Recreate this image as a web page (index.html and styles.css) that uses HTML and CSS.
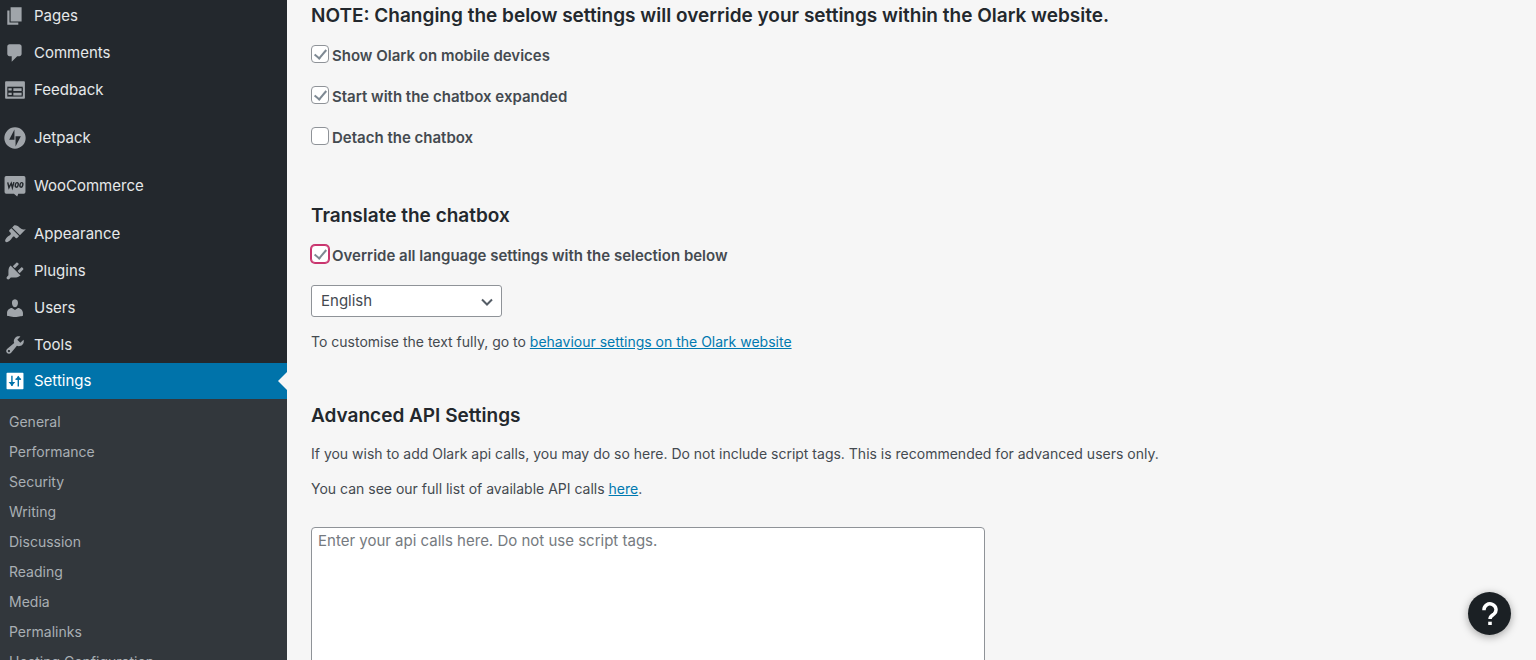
FILE: index.html
```
<!DOCTYPE html>
<html lang="en">
<head>
<meta charset="utf-8">
<title>Olark Settings</title>
<link rel="stylesheet" href="styles.css">
</head>
<body>
<div class="layout">
  <nav class="sidebar" aria-label="Main menu">
    <ul class="menu">
      <li><a class="menu-link" href="#"><svg class="icon" viewBox="0 0 20 20"><path d="M6 15V2h10v13H6zm-1 1h8v2H3V5h2v11z"/></svg>Pages</a></li>
      <li><a class="menu-link" href="#"><svg class="icon" viewBox="0 0 20 20"><path d="M5 2h9c1.100 0 2 .9 2 2v7c0 1.100-.9 2-2 2h-2l-5 5v-5H5c-1.100 0-2-.9-2-2V4c0-1.100.9-2 2-2z"/></svg>Comments</a></li>
      <li><a class="menu-link" href="#"><svg class="icon" viewBox="0 0 20 20"><path fill-rule="evenodd" d="M2 2h16c.55 0 1 .45 1 1v14c0 .55-.45 1-1 1H2c-.55 0-1-.45-1-1V3c0-.55.45-1 1-1zm2 6v2h3V8H4zm4 0v3h9V8H8zm-4 4v2h3v-2H4zm4 0v3h9v-3H8z" class="icon-plate"/><path class="icon-panel" d="M3 7h14v9H3z"/><path d="M4 8.500h3v2H4zM8.500 8.500H16v2.500H8.500zM4 12.500h3v2H4zM8.500 12.500H16V15H8.500z"/></svg>Feedback</a></li>
      <li class="group-start"><a class="menu-link" href="#"><svg class="icon" viewBox="0 0 20 20"><path fill-rule="evenodd" d="M10 .3a9.700 9.700 0 1 0 0 19.400A9.700 9.700 0 0 0 10 .3zM9.500 11.600H4.700l4.800-9.300zM10.500 17.700V8.400h4.800z"/></svg>Jetpack</a></li>
      <li class="group-start"><a class="menu-link" href="#"><svg class="icon" viewBox="0 0 20 20"><path d="M2 1h16a1.500 1.500 0 0 1 1.500 1.500v13A1.500 1.500 0 0 1 18 17h-5l-1 2.500L9 17H2a1.500 1.500 0 0 1-1.500-1.500v-13A1.500 1.500 0 0 1 2 1z"/><g class="icon-cut"><path d="M3.400 6.700l1.100 4.800 2.100-4 1 4 1.400-5"/><ellipse cx="11.600" cy="9" rx="1.300" ry="2.100" transform="rotate(12 11.600 9)"/><ellipse cx="15.800" cy="9" rx="1.300" ry="2.100" transform="rotate(12 15.800 9)"/></g></svg>WooCommerce</a></li>
      <li class="group-start"><a class="menu-link" href="#"><svg class="icon" viewBox="0 0 20 20"><path d="M14.480 11.060L7.410 3.990l1.500-1.500c.5-.56 2.300-.47 3.510.32 1.210.8 1.430 1.280 2.910 2.100 1.180.64 2.450 1.260 4.450.85zm-.71.71L6.700 4.700 4.930 6.470c-.39.39-.39 1.020 0 1.410l1.060 1.060c.39.39.39 1.030 0 1.420-.6.6-1.430 1.110-2.210 1.690-.35.26-.7.53-1.010.84C1.430 14.230.4 16.080 1.400 17.070c.99 1 2.840-.03 4.180-1.360.31-.31.58-.66.85-1.020.57-.78 1.080-1.610 1.690-2.210.39-.39 1.020-.39 1.410 0l1.060 1.060c.39.39 1.020.39 1.410 0z"/></svg>Appearance</a></li>
      <li><a class="menu-link" href="#"><svg class="icon" viewBox="0 0 20 20"><path d="M13.110 4.360L9.870 7.600 8 5.730l3.240-3.240c.35-.34 1.050-.2 1.560.32.52.51.66 1.210.31 1.550zm-8 1.770l.91-1.120 9.010 9.010-1.190.84c-.71.71-2.630 1.160-3.820 1.160H6.140L4.900 17.260c-.59.59-1.540.59-2.120 0-.59-.58-.59-1.530 0-2.120l1.240-1.240v-3.880c0-1.130.4-3.190 1.090-3.890zm7.260 3.970l3.240-3.240c.34-.35 1.040-.21 1.550.31.52.51.66 1.210.31 1.550l-3.240 3.250z"/></svg>Plugins</a></li>
      <li><a class="menu-link" href="#"><svg class="icon" viewBox="0 0 20 20"><path d="M10 9.250c-2.270 0-2.730-3.440-2.730-3.440C7 4.020 7.820 2 9.970 2c2.160 0 2.980 2.020 2.710 3.810 0 0-.41 3.440-2.680 3.440zm0 2.570L12.720 10c2.390 0 4.520 2.330 4.520 4.530v2.490s-3.650 1.130-7.240 1.130c-3.650 0-7.240-1.130-7.240-1.130v-2.490c0-2.250 1.940-4.480 4.470-4.480z"/></svg>Users</a></li>
      <li><a class="menu-link" href="#"><svg class="icon" viewBox="0 0 20 20"><path fill-rule="evenodd" d="M16.680 9.770c-1.340 1.340-3.300 1.670-4.950.99l-5.410 6.520c-.99.99-2.590.99-3.580 0s-.99-2.590 0-3.570l6.520-5.420c-.68-1.650-.35-3.610.99-4.950 1.280-1.280 3.120-1.620 4.720-1.060l-2.890 2.890 2.820 2.820 2.860-2.870c.53 1.580.18 3.390-1.080 4.650zM3.810 16.210c.4.39 1.040.39 1.430 0 .4-.4.4-1.040 0-1.430-.39-.4-1.030-.4-1.430 0-.39.39-.39 1.030 0 1.430z"/></svg>Tools</a></li>
      <li>
        <a class="menu-link current" href="#" aria-current="page"><svg class="icon" viewBox="0 0 20 20"><path d="M3 2.500h14a.7.7 0 0 1 .7.7v13.600a.7.7 0 0 1-.7.7H3a.7.7 0 0 1-.7-.7V3.200a.7.700 0 0 1 .7-.7z"/><g class="icon-cut"><path d="M7.200 5.300v9.200M13 6v9M10.500 8.300h5"/></g><path class="icon-arrow" d="M4.200 11h6l-3 3.600zM10.300 8.800h5.400L13 5.200z"/></svg>Settings</a>
        <ul class="submenu">
          <li><a href="#">General</a></li>
          <li><a href="#">Performance</a></li>
          <li><a href="#">Security</a></li>
          <li><a href="#">Writing</a></li>
          <li><a href="#">Discussion</a></li>
          <li><a href="#">Reading</a></li>
          <li><a href="#">Media</a></li>
          <li><a href="#">Permalinks</a></li>
          <li><a href="#">Hosting Configuration</a></li>
        </ul>
      </li>
    </ul>
  </nav>
  <main class="content">
    <section class="section">
      <h2>NOTE: Changing the below settings will override your settings within the Olark website.</h2>
      <div class="options">
        <label class="option"><input type="checkbox" checked>Show Olark on mobile devices</label>
        <label class="option"><input type="checkbox" checked>Start with the chatbox expanded</label>
        <label class="option"><input type="checkbox">Detach the chatbox</label>
      </div>
    </section>
    <section class="section">
      <h2>Translate the chatbox</h2>
      <div class="options">
        <label class="option"><input class="highlighted" type="checkbox" checked>Override all language settings with the selection below</label>
      </div>
      <div class="select-wrap">
        <select aria-label="Chatbox language"><option>English</option></select>
        <svg class="chevron" viewBox="0 0 12 8"><path d="M1 1.500l5 5 5-5"/></svg>
      </div>
      <p>To customise the text fully, go to <a href="#">behaviour settings on the Olark website</a></p>
    </section>
    <section class="section">
      <h2>Advanced API Settings</h2>
      <p>If you wish to add Olark api calls, you may do so here. Do not include script tags. This is recommended for advanced users only.</p>
      <p>You can see our full list of available API calls <a href="#">here</a>.</p>
      <textarea aria-label="API calls" rows="10" placeholder="Enter your api calls here. Do not use script tags."></textarea>
    </section>
  </main>
</div>
<button class="help" type="button" aria-label="Help"><svg viewBox="0 0 18 24"><path class="help-hook" d="M3 8.300V8a6 5.800 0 1 1 10 4c-2 1.600-4 2.200-4 5"/><path class="help-dot" d="M7.200 19.700h3.600V23H7.200z"/></svg></button>
</body>
</html>
```
FILE: styles.css
```
*,
*::before,
*::after {
  box-sizing: border-box;
}

body {
  margin: 0;
  height: 100vh;
  overflow: hidden;
  background: #f6f6f6;
  color: #444a50;
  font: 14px/20px Inter, "Liberation Sans", sans-serif;
}

.layout {
  display: flex;
  height: 100%;
}

.sidebar {
  flex: 0 0 287px;
  overflow: hidden;
  background: #23282d;
}

.menu,
.submenu {
  margin: 0;
  padding: 0;
  list-style: none;
}

/* The menu is scrolled slightly past its first entry. */
.menu {
  margin-top: -3px;
}

.group-start {
  margin-top: 11px;
}

.menu-link {
  display: flex;
  align-items: center;
  gap: 8px;
  height: 37px;
  padding-left: 4px;
  color: #e6e8ea;
  font-size: 15px;
  text-decoration: none;
}

.icon {
  width: 22px;
  height: 22px;
  fill: #a0a5aa;
}

.icon-panel {
  fill: #23282d;
}

.icon-cut {
  fill: none;
  stroke: #23282d;
  stroke-width: 1.3;
}

.current {
  position: relative;
  height: 36px;
  background: #0073aa;
  color: #fff;
}

.current::after {
  content: "";
  position: absolute;
  top: 9px;
  right: 0;
  border: 9px solid transparent;
  border-left: 0;
  border-right-color: #f6f6f6;
}

.current .icon {
  fill: #fff;
}

.current .icon-cut {
  stroke: #0073aa;
}

.current .icon-arrow {
  fill: #0073aa;
}

.submenu {
  padding: 8px 0;
  background: #32373c;
}

.submenu a {
  display: block;
  padding: 5px 9px;
  color: #a9afb4;
  text-decoration: none;
}

.content {
  flex: 1;
  min-width: 0;
  padding: 0 24px;
  overflow: hidden;
}

.section {
  padding-top: 4px;
  margin-bottom: 48px;
}

h2 {
  margin: 0 0 16px;
  color: #23282d;
  font-size: 19px;
  font-weight: 600;
  line-height: 24px;
}

.options {
  display: grid;
  gap: 17px;
  padding-bottom: 2px;
}

.option {
  display: flex;
  align-items: center;
  gap: 3px;
  height: 24px;
  font-size: 15px;
  font-weight: 600;
}

input[type="checkbox"] {
  appearance: none;
  width: 18px;
  height: 18px;
  margin: 0 0 4px;
  border: 1px solid #8f9398;
  border-radius: 4px;
  background: #fff;
}

input[type="checkbox"]:checked::before {
  content: "";
  display: block;
  width: 7px;
  height: 12px;
  margin: 1px 5px;
  border: solid #7e8993;
  border-width: 0 2px 2px 0;
  transform: rotate(40deg);
}

input.highlighted {
  border-color: #c9356e;
  box-shadow: 0 0 0 1px #c9356e;
}

.select-wrap {
  position: relative;
  width: 191px;
  margin: 15px 0;
}

select {
  display: block;
  appearance: none;
  width: 100%;
  height: 32px;
  padding: 0 9px;
  border: 1px solid #8f9398;
  border-radius: 3px;
  background: #fff;
  color: #444a50;
  font: inherit;
  font-size: 15px;
}

.chevron {
  position: absolute;
  top: 13px;
  right: 9px;
  width: 12px;
  height: 8px;
  fill: none;
  stroke: #555d66;
  stroke-width: 2;
  pointer-events: none;
}

p {
  margin: 0 0 15px;
}

p a {
  color: #0079b0;
}

textarea {
  display: block;
  width: 100%;
  max-width: 674px;
  margin-top: 28px;
  padding: 3px 6px;
  border: 1px solid #8f9398;
  border-radius: 4px;
  background: #fff;
  font: inherit;
  font-size: 15px;
  resize: none;
}

textarea::placeholder {
  color: #757a80;
}

.help {
  position: fixed;
  right: 25px;
  bottom: 25px;
  display: grid;
  place-items: center;
  width: 43px;
  height: 43px;
  padding: 0;
  border: 0;
  border-radius: 50%;
  background: #1b2024;
  box-shadow: 0 2px 8px rgba(0, 0, 0, 0.35);
}

.help svg {
  width: 18px;
  height: 24px;
}

.help-hook {
  fill: none;
  stroke: #fff;
  stroke-width: 3.5;
}

.help-dot {
  fill: #fff;
}
```
